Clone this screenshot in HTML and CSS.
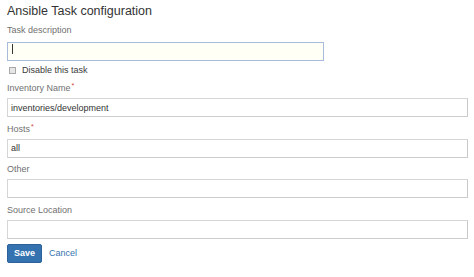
FILE: index.html
```html
<!DOCTYPE html>
<html>
<head>
<meta charset="utf-8">
<link rel="stylesheet" href="styles.css">
</head>
<body>
<form class="form">
  <h1 class="title">Ansible Task configuration</h1>
  <div class="group">
    <label class="label">Task description</label>
    <div class="focus-wrap">
      <input class="text short focused" type="text" value="">
      <span class="caret"></span>
    </div>
  </div>
  <div class="check-row">
    <span class="checkbox"></span>
    <span class="check-label">Disable this task</span>
  </div>
  <div class="group">
    <label class="label">Inventory Name<span class="req">*</span></label>
    <input class="text" type="text" value="inventories/development">
  </div>
  <div class="group">
    <label class="label">Hosts<span class="req">*</span></label>
    <input class="text" type="text" value="all">
  </div>
  <div class="group">
    <label class="label">Other</label>
    <input class="text" type="text" value="">
  </div>
  <div class="group">
    <label class="label">Source Location</label>
    <input class="text" type="text" value="">
  </div>
  <div class="buttons">
    <button class="save" type="button">Save</button>
    <a class="cancel" href="#">Cancel</a>
  </div>
</form>
</body>
</html>
```
FILE: styles.css
```css
html, body {
  margin: 0;
  padding: 0;
  background: #ffffff;
}
body {
  font-family: "Liberation Sans", Arial, sans-serif;
  color: #333333;
}
.form {
  padding: 0 7px;
  display: flex;
  flex-direction: column;
}
.title {
  margin: 0;
  padding-top: 1px;
  font-size: 12.5px;
  line-height: 21px;
  font-weight: normal;
  color: #333333;
}
.group {
  display: flex;
  flex-direction: column;
  gap: 4px;
}
.group + .group {
  margin-top: 6.5px;
}
.title + .group {
  margin-top: 3px;
}
.label {
  display: block;
  height: 11px;
  font-size: 9px;
  line-height: 11px;
  color: #707070;
}
.req {
  position: relative;
  top: -3px;
  line-height: 0;
  color: #d04437;
  font-size: 7px;
  margin-left: 1px;
}
.text {
  box-sizing: border-box;
  width: 461px;
  height: 19px;
  margin: 0;
  padding: 0 3px;
  border: 1px solid #d6d6d6;
  border-right-color: #c9c9c9;
  border-bottom-color: #cdcdcd;
  background: #ffffff;
  font-family: "Liberation Sans", Arial, sans-serif;
  font-size: 9px;
  color: #333333;
  outline: none;
}
.short {
  width: 317px;
}
.focused {
  border-color: #a9bbdc;
  background: #fffff6;
}
.focus-wrap {
  position: relative;
  width: 317px;
  height: 19px;
}
.caret {
  position: absolute;
  left: 5px;
  top: 4px;
  width: 1px;
  height: 10px;
  background: #333333;
}
.check-row {
  margin-top: 5.5px;
  display: flex;
  align-items: center;
  gap: 6px;
  height: 11px;
  padding-left: 2px;
}
.checkbox {
  box-sizing: border-box;
  width: 7px;
  height: 7px;
  border: 1px solid #a8a8a8;
  background: #e6e6e6;
}
.check-label {
  font-size: 9px;
  line-height: 11px;
  color: #3a3a3a;
}
.check-row + .group {
  margin-top: 7.5px;
}
.buttons {
  margin-top: 5px;
  display: flex;
  align-items: center;
  gap: 7px;
}
.save {
  box-sizing: border-box;
  width: 35px;
  height: 19px;
  margin: 0;
  padding: 0;
  border: 1px solid #2c619a;
  border-radius: 2px;
  background: #3572b0;
  color: #ffffff;
  font-family: "Liberation Sans", Arial, sans-serif;
  font-size: 9px;
  font-weight: bold;
}
.cancel {
  font-size: 9px;
  color: #3572b0;
  text-decoration: none;
}
```
